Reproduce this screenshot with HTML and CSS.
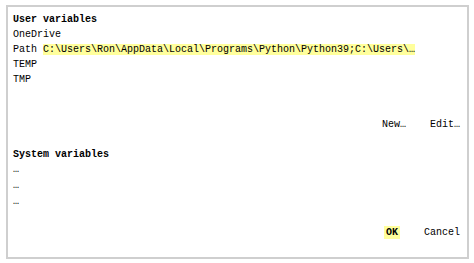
FILE: index.html
```html
<!DOCTYPE html>
<html>
<head>
<meta charset="utf-8">
<link rel="stylesheet" href="styles.css">
</head>
<body>
<div class="dialog">
  <section class="group">
    <div class="heading">User variables</div>
    <div class="row">OneDrive</div>
    <div class="row">Path <span class="hl">C:\Users\Ron\AppData\Local\Programs\Python\Python39;C:\Users\…</span></div>
    <div class="row">TEMP</div>
    <div class="row">TMP</div>
    <div class="buttons first">
      <span class="btn">New…</span>
      <span class="btn">Edit…</span>
    </div>
  </section>
  <section class="group system">
    <div class="heading">System variables</div>
    <div class="row">…</div>
    <div class="row">…</div>
    <div class="row">…</div>
    <div class="buttons second">
      <span class="btn ok"><span class="hl">OK</span></span>
      <span class="btn">Cancel</span>
    </div>
  </section>
</div>
</body>
</html>
```
FILE: styles.css
```css
html, body {
  margin: 0;
  padding: 0;
  background: #ffffff;
}
body {
  font-family: "Liberation Mono", "DejaVu Sans Mono", monospace;
  font-size: 10px;
  line-height: 15px;
  color: #000000;
}
.dialog {
  margin: 5px 0 0 6px;
  border: 2px solid #cfcfcf;
  padding: 5px 0 0 5px;
  box-sizing: content-box;
  width: 454px;
  height: 245px;
  display: flex;
  flex-direction: column;
}
.heading {
  font-weight: bold;
}
.hl {
  background: #ffff9c;
}
.buttons {
  display: flex;
  justify-content: flex-end;
  gap: 24px;
  padding-right: 7px;
}
.buttons.first {
  margin-top: 30px;
  margin-bottom: 15px;
}
.system .row {
  line-height: 16px;
}
.system .row:first-of-type {
  margin-top: 1px;
}
.buttons.second {
  margin-top: 15px;
}
.ok {
  font-weight: bold;
}
.ok .hl {
  padding: 1px 2px;
}
```
